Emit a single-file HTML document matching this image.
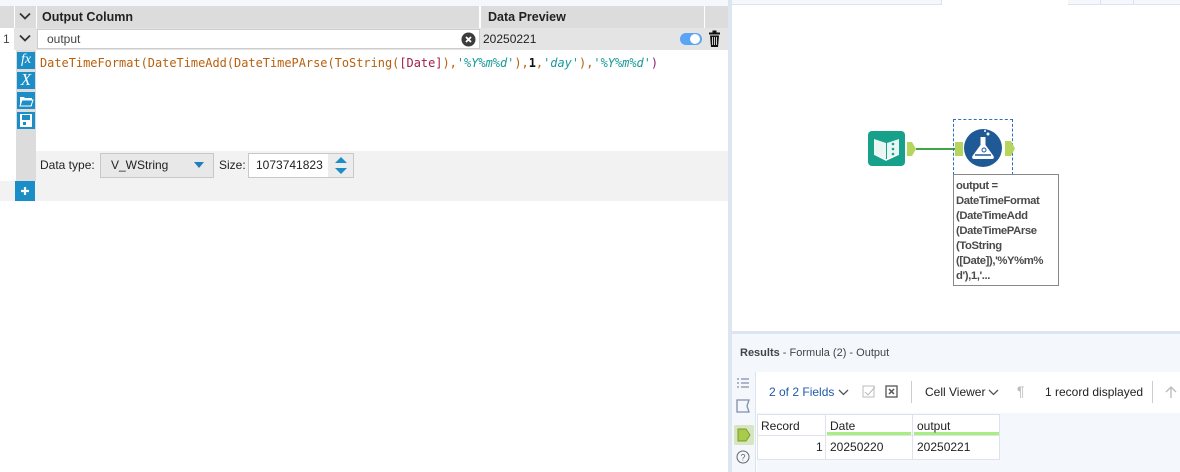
<!DOCTYPE html>
<html><head><meta charset="utf-8"><style>
*{box-sizing:border-box;margin:0;padding:0}
body{width:1180px;height:472px;overflow:hidden;background:#fff;font-family:"Liberation Sans",sans-serif;font-size:12px;color:#222;position:relative}
.a{position:absolute}
.mono{font-family:"DejaVu Sans Mono","Liberation Mono",monospace;font-size:11.95px}
</style></head><body>
<div class="a" style="left:0;top:0;width:728px;height:6px;background:#f4f7fc"></div>
<div class="a" style="left:0;top:6px;width:728px;height:22px;background:#dcdcdc"></div>
<div class="a" style="left:14px;top:6px;width:1px;height:22px;background:#fff"></div>
<div class="a" style="left:36px;top:6px;width:1px;height:22px;background:#fff"></div>
<div class="a" style="left:479px;top:6px;width:2px;height:22px;background:#fff"></div>
<div class="a" style="left:704px;top:6px;width:1px;height:22px;background:#fff"></div>
<svg class="a" style="left:19px;top:12px" width="12" height="9"><path d="M1 1.5L6 6.5L11 1.5" stroke="#333" stroke-width="1.8" fill="none"/></svg>
<div class="a" style="left:42px;top:10px;font-weight:bold;font-size:12.5px">Output Column</div>
<div class="a" style="left:488px;top:10px;font-weight:bold;font-size:12.5px">Data Preview</div>
<div class="a" style="left:0;top:28px;width:728px;height:22px;background:#e4e4e4"></div>
<div class="a" style="left:0;top:28px;width:14px;height:22px;background:#fff"></div>
<div class="a" style="left:3px;top:32px;color:#444">1</div>
<svg class="a" style="left:19px;top:34px" width="12" height="9"><path d="M1 1.5L6 6.5L11 1.5" stroke="#333" stroke-width="1.8" fill="none"/></svg>
<div class="a" style="left:37px;top:29px;width:443px;height:20px;background:#fff;border:1px solid #ccc"></div>
<div class="a" style="left:47px;top:32px;color:#444">output</div>
<svg class="a" style="left:461px;top:32px" width="15" height="15"><circle cx="7.5" cy="7.5" r="7" fill="#3c3c3c"/><path d="M5 5L10 10M10 5L5 10" stroke="#fff" stroke-width="1.8"/></svg>
<div class="a" style="left:483px;top:32px">20250221</div>
<div class="a" style="left:680px;top:33px;width:22px;height:12px;border-radius:6px;background:#5aa3f5"></div>
<div class="a" style="left:690px;top:34px;width:10px;height:10px;border-radius:5px;background:#fff"></div>
<svg class="a" style="left:708px;top:30px" width="13" height="18"><rect x="1" y="2.5" width="11" height="2" fill="#111"/><rect x="4.5" y="0.5" width="4" height="2" fill="#111"/><path d="M2 5.5h9l-1 11.5h-7z" fill="#111"/><path d="M4.5 7v8M6.5 7v8M8.5 7v8" stroke="#fff" stroke-width=".8"/></svg>
<div class="a" style="left:16px;top:50px;width:20px;height:131px;background:#dcdcdc"></div>
<div class="a" style="left:17px;top:52px;width:18px;height:17px;background:#1b8dc7;color:#fff;font-family:'Liberation Serif',serif;font-style:italic;font-size:14px;text-align:center;line-height:15px">fx</div>
<div class="a" style="left:17px;top:72px;width:18px;height:17px;background:#1b8dc7;color:#fff;font-family:'Liberation Serif',serif;font-style:italic;font-size:17px;text-align:center;line-height:16px">X</div>
<div class="a" style="left:17px;top:92px;width:18px;height:17px;background:#1b8dc7"><svg width="18" height="17"><path d="M3 5h4l1 1h7v8H3z" fill="#fff"/><path d="M5 8h11l-2 6H3z" fill="#1b8dc7" stroke="#fff"/></svg></div>
<div class="a" style="left:17px;top:112px;width:18px;height:17px;background:#1b8dc7"><svg width="18" height="17"><rect x="3" y="2" width="12" height="13" fill="#fff"/><rect x="5" y="3" width="8" height="5" fill="#1b8dc7"/><rect x="6" y="10" width="3" height="3" fill="#1b8dc7"/></svg></div>
<div class="a mono" style="left:40px;top:56px;white-space:pre"><span style="color:#b8600e">DateTimeFormat(DateTimeAdd(DateTimePArse(ToString(</span><span style="color:#a0204a">[Date]</span><span style="color:#b8600e">),</span><span style="color:#1b9a9a;font-style:italic">'%Y%m%d'</span><span style="color:#b8600e">),</span><b style="color:#111">1</b><span style="color:#b8600e">,</span><span style="color:#1b9a9a;font-style:italic">'day'</span><span style="color:#b8600e">),</span><span style="color:#1b9a9a;font-style:italic">'%Y%m%d'</span><span style="color:#8a2080">)</span></div>
<div class="a" style="left:36px;top:151px;width:692px;height:30px;background:#f2f2f2"></div>
<div class="a" style="left:40px;top:158px">Data type:</div>
<div class="a" style="left:100px;top:153px;width:114px;height:25px;background:#e8e8e8;border:1px solid #c8c8c8"></div>
<div class="a" style="left:111px;top:158px">V_WString</div>
<svg class="a" style="left:194px;top:162px" width="10" height="6"><path d="M0 0h10L5 6z" fill="#1b7fc0"/></svg>
<div class="a" style="left:219px;top:158px">Size:</div>
<div class="a" style="left:248px;top:153px;width:106px;height:25px;background:#fff;border:1px solid #c8c8c8"></div>
<div class="a" style="left:256px;top:158px">1073741823</div>
<div class="a" style="left:328px;top:154px;width:25px;height:23px;background:#ececec"></div>
<svg class="a" style="left:335px;top:156px" width="12" height="19"><path d="M0 7L6 1L12 7z M0 12L6 18L12 12z" fill="#1b8dc7"/></svg>
<div class="a" style="left:0;top:181px;width:728px;height:20px;background:#f2f2f2"></div>
<div class="a" style="left:15px;top:181px;width:20px;height:20px;background:#1b8dc7"></div>
<svg class="a" style="left:20px;top:186px" width="10" height="10"><path d="M5 1v8M1 5h8" stroke="#fff" stroke-width="2.2"/></svg>
<div class="a" style="left:728px;top:0;width:4px;height:472px;background:#dde5f0"></div>
<div class="a" style="left:732px;top:0;width:210px;height:5px;background:#f4f7fc;border-bottom:1px solid #dde3ed;border-right:1px solid #dde3ed"></div>
<div class="a" style="left:1068px;top:0;width:112px;height:5px;background:#f4f7fc;border-bottom:1px solid #dde3ed"></div>
<div class="a" style="left:1100px;top:0;width:1px;height:5px;background:#dde3ed"></div>
<div class="a" style="left:1133px;top:0;width:1px;height:5px;background:#dde3ed"></div>
<div class="a" style="left:868px;top:131px;width:37px;height:35px;border-radius:4px;background:#17a08a"></div>
<svg class="a" style="left:868px;top:131px" width="37" height="35"><path d="M6 8l12 4v16l-12-4z M31 8l-12 4v16l12-4z" fill="#fff" opacity=".9"/><path d="M8 24l10 5 11-5" stroke="#fff" stroke-width="1.5" fill="none"/><circle cx="25" cy="13" r="1.3" fill="#17a08a"/><circle cx="25" cy="18" r="1.3" fill="#17a08a"/><circle cx="25" cy="23" r="1.3" fill="#17a08a"/></svg>
<svg class="a" style="left:907px;top:141px" width="10" height="16"><path d="M0 1h5l4 7-4 7H0z" fill="#b6d55c"/></svg>
<div class="a" style="left:916px;top:148px;width:40px;height:2px;background:#3fa548"></div>
<div class="a" style="left:953px;top:119px;width:60px;height:56px;border:1px dashed #2e6fc0"></div>
<div class="a" style="left:955px;top:142px;width:8px;height:14px;background:#b6d55c"></div>
<svg class="a" style="left:963px;top:128px" width="40" height="40"><circle cx="20" cy="20" r="19" fill="#1f5a96"/><path d="M16 9h8M17.5 9v8l-8 11c-1 2 0 3 2 3h17c2 0 3-1 2-3l-8-11V9" fill="#fff"/><path d="M12 27h16" stroke="#1f5a96" stroke-width="1.5"/><circle cx="21" cy="22" r="2" fill="none" stroke="#1f5a96"/><circle cx="25" cy="6" r="1.5" fill="#fff"/><circle cx="22" cy="3" r="1" fill="#fff"/></svg>
<svg class="a" style="left:1005px;top:140px" width="11" height="17"><path d="M0 1h6l4 7.5-4 7.5H0z" fill="#b6d55c"/></svg>
<div class="a" style="left:953px;top:174px;width:106px;height:112px;border:1px solid #888;background:#fff;padding:4px 2px;font-size:11.3px;line-height:15px;color:#4a4a4a;font-weight:bold;letter-spacing:-0.4px">output =<br>DateTimeFormat<br>(DateTimeAdd<br>(DateTimePArse<br>(ToString<br>([Date]),'%Y%m%<br>d'),1,'...</div>
<div class="a" style="left:732px;top:331px;width:448px;height:3px;background:#dde5f0"></div>
<div class="a" style="left:732px;top:334px;width:448px;height:38px;background:#f4f7fc"></div>
<div class="a" style="left:740px;top:347px;font-size:11px;color:#444"><b>Results</b> - Formula (2) - Output</div>
<div class="a" style="left:732px;top:372px;width:24px;height:100px;background:#f4f7fc;border-right:1px solid #dde3ed"></div>
<svg class="a" style="left:736px;top:377px" width="14" height="12"><path d="M1 2h2M5 2h8M1 6h2M5 6h8M1 10h2M5 10h8" stroke="#8090a8" stroke-width="1.2"/></svg>
<svg class="a" style="left:736px;top:399px" width="14" height="14"><path d="M1 1h12l-2 6 2 6H1z" fill="none" stroke="#8090a8" stroke-width="1.3"/></svg>
<div class="a" style="left:734px;top:425px;width:20px;height:20px;background:#d8e6c0;border-radius:2px"></div>
<svg class="a" style="left:737px;top:428px" width="14" height="14"><path d="M1 1h8l4 6-4 6H1z" fill="#a8cc4a" stroke="#7a9a30"/></svg>
<svg class="a" style="left:736px;top:450px" width="14" height="14"><circle cx="7" cy="7" r="6" fill="none" stroke="#666"/><text x="7" y="10.5" font-size="9" text-anchor="middle" fill="#666" font-family="Liberation Sans">?</text></svg>
<div class="a" style="left:769px;top:385px;color:#1f5aa8">2 of 2 Fields</div>
<svg class="a" style="left:838px;top:389px" width="11" height="7"><path d="M1 1l4.5 4.5L10 1" stroke="#555" stroke-width="1.3" fill="none"/></svg>
<svg class="a" style="left:862px;top:385px" width="14" height="14"><rect x="1" y="1" width="11" height="11" fill="none" stroke="#bbb"/><path d="M3 7l3 3 7-8" stroke="#bbb" fill="none"/></svg>
<svg class="a" style="left:885px;top:385px" width="14" height="14"><rect x="1" y="1" width="11" height="11" fill="none" stroke="#555" stroke-width="1.3"/><path d="M4 4l5 5M9 4l-5 5" stroke="#555" stroke-width="1.5"/></svg>
<div class="a" style="left:911px;top:381px;width:1px;height:22px;background:#ccc"></div>
<div class="a" style="left:925px;top:385px">Cell Viewer</div>
<svg class="a" style="left:988px;top:389px" width="11" height="7"><path d="M1 1l4.5 4.5L10 1" stroke="#555" stroke-width="1.3" fill="none"/></svg>
<div class="a" style="left:1017px;top:383px;color:#bbb;font-size:14px">¶</div>
<div class="a" style="left:1045px;top:385px">1 record displayed</div>
<div class="a" style="left:1152px;top:381px;width:1px;height:22px;background:#ccc"></div>
<svg class="a" style="left:1164px;top:385px" width="14" height="14"><path d="M7 13V2M2 7l5-5 5 5" stroke="#bbb" stroke-width="1.3" fill="none"/></svg>
<div class="a" style="left:757px;top:413px;width:423px;height:59px;background:#f4f7fc"></div>
<div class="a" style="left:757px;top:414px;width:243px;height:46px;background:#fff;border:1px solid #dde3ed"></div>
<div class="a" style="left:825px;top:414px;width:1px;height:46px;background:#dde3ed"></div>
<div class="a" style="left:912px;top:414px;width:1px;height:46px;background:#dde3ed"></div>
<div class="a" style="left:758px;top:435px;width:241px;height:1px;background:#dde3ed"></div>
<div class="a" style="left:827px;top:432px;width:84px;height:3px;background:#a8ee80"></div>
<div class="a" style="left:914px;top:432px;width:85px;height:3px;background:#a8ee80"></div>
<div class="a" style="left:761px;top:419px">Record</div>
<div class="a" style="left:830px;top:419px">Date</div>
<div class="a" style="left:917px;top:419px">output</div>
<div class="a" style="left:816px;top:440px">1</div>
<div class="a" style="left:830px;top:440px">20250220</div>
<div class="a" style="left:917px;top:440px">20250221</div>
</body></html>
